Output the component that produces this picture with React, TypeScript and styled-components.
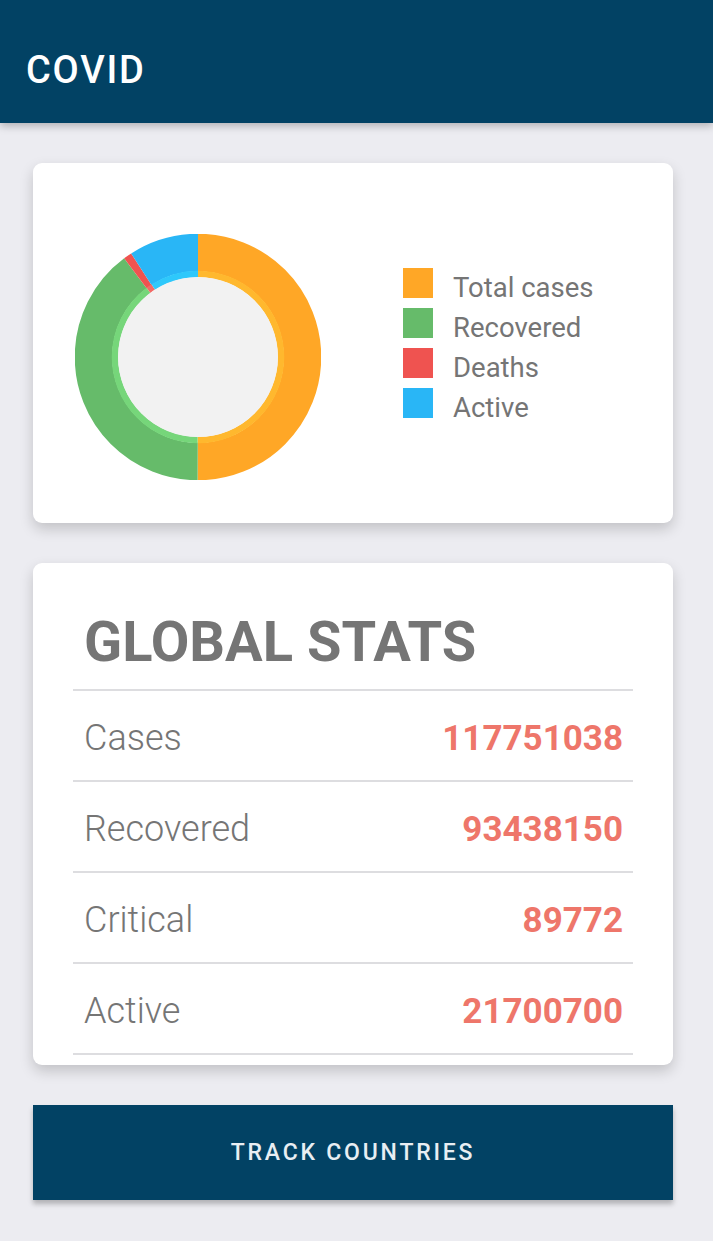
import React from 'react';
import styled, { createGlobalStyle } from "styled-components";

const GlobalStyle = createGlobalStyle`
    * { box-sizing: border-box; }
    body {
        margin: 0;
        background: #ececf1;
        font-family: Roboto, "Noto Sans", sans-serif;
    }
`

type Slice = {
    label: string
    value: number
    color: string
    light: string
}

const slices: Slice[] = [
    {label: "Total cases", value: 117751038, color: "#ffa726", light: "#ffb82e"},
    {label: "Recovered", value: 93438150, color: "#66bb6a", light: "#76d67a"},
    {label: "Deaths", value: 2612188, color: "#ef5350", light: "#f26a66"},
    {label: "Active", value: 21700700, color: "#29b6f6", light: "#2ec8fb"},
]

const stats = [
    {name: "Cases", value: "117751038"},
    {name: "Recovered", value: "93438150"},
    {name: "Critical", value: "89772"},
    {name: "Active", value: "21700700"},
]

const Donut = () => {
    const total = slices.reduce((s, x) => s + x.value, 0)
    const ring = (r: number, width: number, light: boolean) => {
        const c = 2 * Math.PI * r
        let start = 0
        return slices.map((s) => {
            const len = (s.value / total) * c
            const el = (
                <circle
                    key={s.label + r}
                    cx={123} cy={123} r={r}
                    fill="none"
                    stroke={light ? s.light : s.color}
                    strokeWidth={width}
                    strokeDasharray={`${len} ${c}`}
                    strokeDashoffset={-start}
                    transform="rotate(-90 123 123)"
                />
            )
            start += len
            return el
        })
    }
    return (
        <ChartBox>
            <svg width="246" height="246" viewBox="0 0 246 246">
                {ring(104.5, 37.5, false)}
                {ring(83, 6.5, true)}
                <circle cx={123} cy={123} r={80} fill="#f2f2f2"/>
            </svg>
        </ChartBox>
    )
}

export default function App() {
    return (
        <>
            <GlobalStyle/>
            <Header>
                <Title>COVID</Title>
            </Header>
            <Main>
                <ChartCard>
                    <Donut/>
                    <Legend>
                        {slices.map((s) => (
                            <LegendItem key={s.label}>
                                <Swatch color={s.color}/>
                                <LegendText>{s.label}</LegendText>
                            </LegendItem>
                        ))}
                    </Legend>
                </ChartCard>
                <StatsCard>
                    <StatsTitle>GLOBAL STATS</StatsTitle>
                    {stats.map((s) => (
                        <StatRow key={s.name}>
                            <StatName>{s.name}</StatName>
                            <StatValue>{s.value}</StatValue>
                        </StatRow>
                    ))}
                </StatsCard>
                <TrackButton>TRACK COUNTRIES</TrackButton>
            </Main>
        </>
    )
}

const Header = styled.header`
    height: 123px;
    background: #024264;
    display: flex;
    align-items: center;
    padding: 16px 26px 0;
    box-shadow: 0 3px 8px rgba(0, 0, 0, 0.25);
    position: relative;
`
const Title = styled.h1`
    margin: 0;
    color: #fff;
    font-weight: 500;
    font-size: 38px;
    letter-spacing: 1.8px;
`
const Main = styled.main`
    padding: 40px 40px 40px 33px;
    display: flex;
    flex-direction: column;
    gap: 40px;
`
const Card = styled.section`
    background: #fff;
    border-radius: 9px;
    box-shadow: 0 6px 14px rgba(0, 0, 0, 0.18);
`
const ChartCard = styled(Card)`
    height: 360px;
    display: flex;
    align-items: center;
    padding-left: 42px;
`
const ChartBox = styled.div`
    width: 246px;
    height: 246px;
    margin-top: 28px;
    svg { display: block; }
`
const Legend = styled.ul`
    list-style: none;
    margin: 0 0 0 82px;
    padding: 0;
    display: flex;
    flex-direction: column;
    gap: 10px;
`
const LegendItem = styled.li`
    display: flex;
    align-items: center;
    gap: 20px;
    height: 30px;
`
const Swatch = styled.span<{ color: string }>`
    width: 30px;
    height: 30px;
    background: ${(p) => p.color};
`
const LegendText = styled.span`
    font-size: 27.5px;
    color: #757575;
    padding-top: 9px;
`
const StatsCard = styled(Card)`
    padding: 44px 40px 10px;
`
const StatsTitle = styled.h2`
    margin: 0;
    padding: 0 0 12px 11px;
    font-size: 56px;
    font-weight: 700;
    color: #757575;
    line-height: 70px;
    border-bottom: 2px solid #dddde0;
`
const StatRow = styled.div`
    height: 91px;
    display: flex;
    align-items: center;
    justify-content: space-between;
    padding: 5px 10px 0 11px;
    border-bottom: 2px solid #dddde0;
`
const StatName = styled.span`
    font-size: 36px;
    font-weight: 300;
    color: #757575;
`
const StatValue = styled.span`
    font-size: 35px;
    font-weight: 700;
    color: #ee766a;
`
const TrackButton = styled.button`
    height: 95px;
    border: none;
    border-radius: 0;
    background: #024264;
    color: #e8eef3;
    font-family: Roboto, sans-serif;
    font-size: 23px;
    font-weight: 500;
    letter-spacing: 2.8px;
    box-shadow: 0 4px 5px rgba(0, 0, 0, 0.25);
`
